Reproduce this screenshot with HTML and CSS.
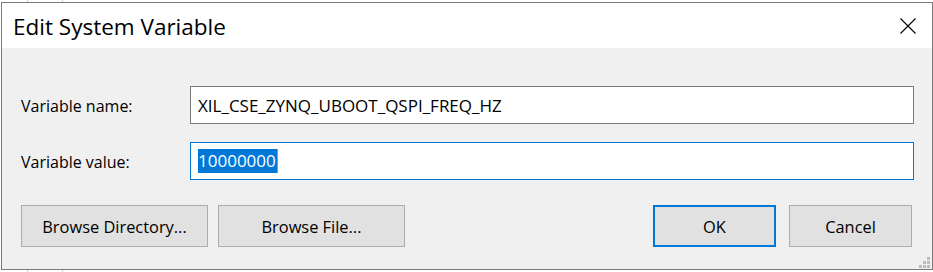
FILE: index.html
```html
<!DOCTYPE html>
<html>
<head>
<meta charset="utf-8">
<link rel="stylesheet" href="styles.css">
</head>
<body>
<div class="behind-top"><span class="bt-line l1"></span><span class="bt-line l2"></span></div>
<div class="dialog">
  <div class="titlebar">
    <div class="title">Edit System Variable</div>
    <div class="close">
      <svg width="16" height="16" viewBox="0 0 16 16"><path d="M0.5 0.5 L15.5 15.5 M15.5 0.5 L0.5 15.5" stroke="#000" stroke-width="1.1" fill="none"/></svg>
    </div>
  </div>
  <div class="content">
    <div class="row">
      <label class="label">Variable name:</label>
      <div class="input">XIL_CSE_ZYNQ_UBOOT_QSPI_FREQ_HZ</div>
    </div>
    <div class="row row2">
      <label class="label">Variable value:</label>
      <div class="input focused"><span class="sel">10000000</span><span class="caret"></span></div>
    </div>
    <div class="buttons">
      <div class="left">
        <div class="btn wide">Browse Directory...</div>
        <div class="btn wide">Browse File...</div>
      </div>
      <div class="right">
        <div class="btn default">OK</div>
        <div class="btn">Cancel</div>
      </div>
    </div>
    <div class="grip">
      <span class="d" style="left:9px;top:0"></span>
      <span class="d" style="left:5px;top:4px"></span><span class="d" style="left:9px;top:4px"></span>
      <span class="d" style="left:1px;top:8px"></span><span class="d" style="left:5px;top:8px"></span><span class="d" style="left:9px;top:8px"></span>
    </div>
  </div>
</div>
</body>
</html>
```
FILE: styles.css
```css
* { box-sizing: border-box; }
html, body { margin: 0; padding: 0; }
body {
  width: 933px;
  height: 272px;
  background: #ffffff;
  overflow: hidden;
  position: relative;
  font-family: "Open Sans", "Noto Sans", sans-serif;
}
.behind-top {
  height: 2px;
  position: relative;
}
.bt-line { position: absolute; top: 0; width: 1px; height: 272px; background: #d0d0d0; }
.l1 { left: 27px; }
.l2 { left: 62px; }
.dialog {
  position: relative;
  margin-left: 1px;
  width: 932px;
  height: 268px;
  border: 1px solid #7a7a7a;
  background: #f0f0f0;
  display: flex;
  flex-direction: column;
}
.titlebar {
  height: 45px;
  background: #ffffff;
  display: flex;
  align-items: center;
  justify-content: space-between;
  padding: 0 16px 0 11px;
}
.title {
  font-size: 22.5px;
  color: #000;
  letter-spacing: 0;
  padding-top: 1px;
}
.close { width: 16px; height: 16px; display: flex; }
.content {
  flex: 1;
  position: relative;
  padding: 38px 18px 0 19px;
  display: flex;
  flex-direction: column;
}
.row {
  display: flex;
  align-items: center;
  height: 38px;
}
.row2 { margin-top: 18px; }
.label {
  width: 169px;
  font-size: 16px;
  color: #000;
  padding-top: 1px;
}
.input {
  flex: 1;
  height: 38px;
  background: #fff;
  border: 1px solid #7a7a7a;
  font-size: 17px;
  padding-left: 7px;
  display: flex;
  align-items: center;
  color: #000;
}
.input.focused { border-color: #0078d7; }
.sel {
  background: #0078d7;
  color: #fff;
  line-height: 24px;
  height: 24px;
  padding-right: 1px;
}
.caret { width: 1px; height: 24px; background: #e08a2c; }
.buttons {
  margin-top: 25px;
  display: flex;
  justify-content: space-between;
  padding-right: 2px;
}
.left, .right { display: flex; }
.left { gap: 10px; }
.right { gap: 13px; }
.btn {
  height: 42px;
  width: 123px;
  background: #e1e1e1;
  border: 1px solid #adadad;
  font-size: 16.4px;
  display: flex;
  align-items: center;
  justify-content: center;
  color: #000;
}
.btn.wide { width: 187px; }
.btn.default { border: 2px solid #0078d7; }
.grip {
  position: absolute;
  right: 2px;
  bottom: 1px;
  width: 12px;
  height: 11px;
}
.d { position: absolute; width: 3px; height: 3px; background: #bcbcbc; }
```
